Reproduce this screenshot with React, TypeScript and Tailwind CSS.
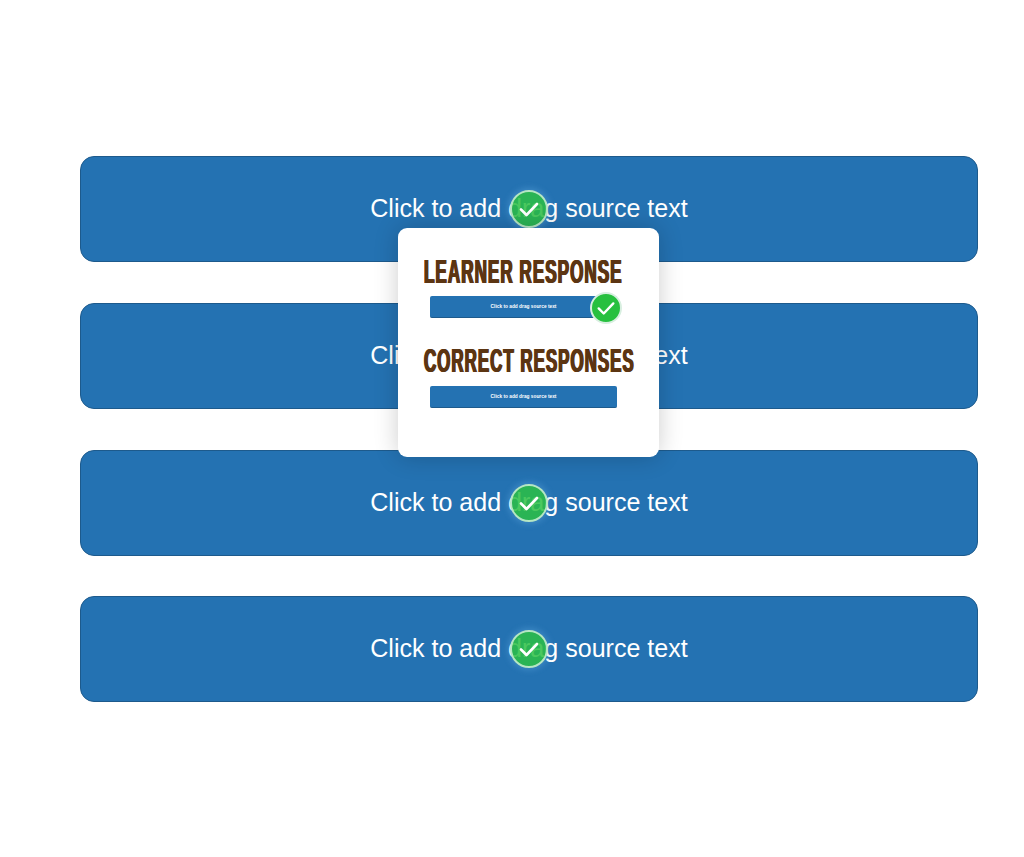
function Check({ size, w = 2.6 }: { size: number; w?: number }) {
  return (
    <svg width={size} height={size} viewBox="0 0 24 24" fill="none" stroke="white" strokeWidth={w} strokeLinecap="round" strokeLinejoin="round">
      <path d="M4 12.5l5.5 5.5L20 7" />
    </svg>
  );
}

function Bar({ cover, className }: { cover?: boolean; className?: string }) {
  return (
    <div className={`relative h-[106px] flex items-center justify-center rounded-[14px] bg-[#2472b2] border border-[#1d5a8c] ${className ?? ""}`}>
      <span className="text-[25.05px] leading-[26px] -translate-y-px text-white font-['Liberation_Sans',sans-serif]">Click to add drag source text</span>
      {cover && (
        <span className="absolute left-[429px] top-[33px] w-[38px] h-[38px] rounded-full bg-[#2cc043]/85 border-2 border-[#b5e6c4] shadow-[0_0_6px_2px_rgba(120,190,240,0.3)] flex items-center justify-center">
          <Check size={24} />
        </span>
      )}
    </div>
  );
}

function MiniBar({ check }: { check?: boolean }) {
  return (
    <div className="relative ml-[32px] w-[187px] h-[22px] bg-[#2472b2] border-b border-[#1d5a8c] rounded-[2px] flex items-center justify-center">
      <span className="text-[4.8px] font-bold leading-[6px] pt-[1px] text-white font-['Liberation_Sans',sans-serif]">Click to add drag source text</span>
      {check && (
        <span className="absolute left-[160px] top-[-4px] w-[32px] h-[32px] rounded-full bg-[#27c03f] border-2 border-[#d8efe0] flex items-center justify-center">
          <Check size={22} />
        </span>
      )}
    </div>
  );
}

function Heading({ children, scale }: { children: string; scale: string }) {
  return (
    <div className={`ml-[26px] w-[212px] h-[32px] text-[34px] leading-[30px] tracking-[2px] font-bold text-[#5c3512] whitespace-nowrap font-['Liberation_Sans',sans-serif] origin-left [text-shadow:1.3px_0_0_#5c3512,-1.3px_0_0_#5c3512] ${scale}`}>
      {children}
    </div>
  );
}

export default function App() {
  return (
    <div className="relative w-[1024px] h-[857px] bg-white overflow-hidden">
      <div className="pt-[156px] pl-[80px] pr-[46px] flex flex-col">
        <Bar cover />
        <Bar className="mt-[41px]" />
        <Bar cover className="mt-[41px]" />
        <Bar cover className="mt-[40px]" />
      </div>
      <div className="absolute left-[398px] top-[228px] w-[261px] h-[229px] bg-white rounded-[9px] shadow-[0_0_24px_rgba(0,0,0,0.2)] pt-[28px]">
        <Heading scale="scale-x-[0.503]">LEARNER RESPONSE</Heading>
        <div className="mt-[8px]"><MiniBar check /></div>
        <div className="mt-[27px]"><Heading scale="scale-x-[0.498]">CORRECT RESPONSES</Heading></div>
        <div className="mt-[9px]"><MiniBar /></div>
      </div>
    </div>
  );
}
